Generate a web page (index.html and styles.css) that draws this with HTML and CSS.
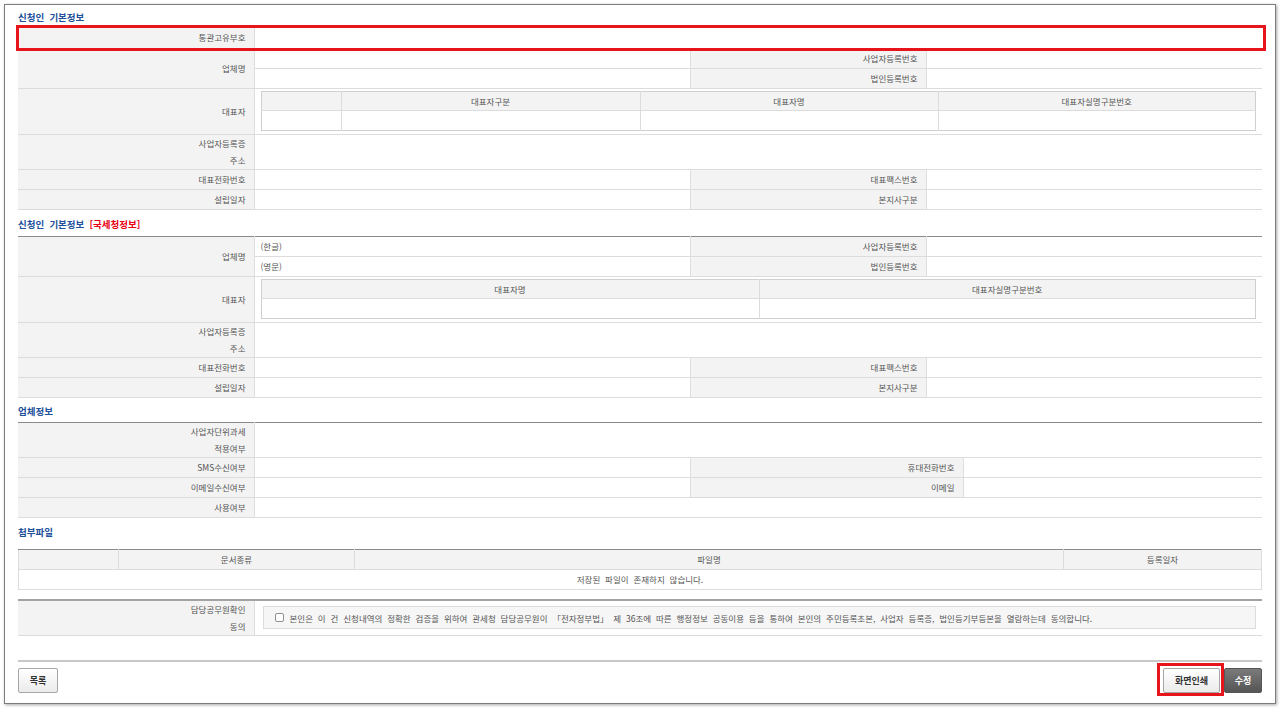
FILE: index.html
```html
<!DOCTYPE html>
<html lang="ko">
<head>
<meta charset="utf-8">
<title>신청인 기본정보</title>
<link rel="stylesheet" href="styles.css">
</head>
<body>
<div class="frame">
  <h3 class="sec-title first">신청인 기본정보</h3>
  <div class="hl-wrap">
    <table class="form">
      <colgroup><col class="c-lab"><col class="c-val"><col class="c-lab"><col></colgroup>
      <tr><th>통관고유부호</th><td colspan="3"></td></tr>
      <tr><th rowspan="2">업체명</th><td></td><th>사업자등록번호</th><td></td></tr>
      <tr><td></td><th>법인등록번호</th><td></td></tr>
      <tr><th>대표자</th>
        <td colspan="3" class="nest-cell">
          <table class="inner">
            <colgroup><col class="n1"><col class="n2"><col class="n3"><col></colgroup>
            <tr><th></th><th>대표자구분</th><th>대표자명</th><th>대표자실명구분번호</th></tr>
            <tr><td></td><td></td><td></td><td></td></tr>
          </table>
        </td></tr>
      <tr><th class="two">사업자등록증<br>주소</th><td colspan="3"></td></tr>
      <tr><th>대표전화번호</th><td></td><th>대표팩스번호</th><td></td></tr>
      <tr><th>설립일자</th><td></td><th>본지사구분</th><td></td></tr>
    </table>
    <div class="hl-row"></div>
  </div>

  <h3 class="sec-title s2">신청인 기본정보 <span class="red">[국세청정보]</span></h3>
  <table class="form topline">
    <colgroup><col class="c-lab"><col class="c-val"><col class="c-lab"><col></colgroup>
    <tr><th rowspan="2">업체명</th><td>(한글)</td><th>사업자등록번호</th><td></td></tr>
    <tr><td>(영문)</td><th>법인등록번호</th><td></td></tr>
    <tr><th>대표자</th>
      <td colspan="3" class="nest-cell">
        <table class="inner">
          <colgroup><col class="half"><col></colgroup>
          <tr><th>대표자명</th><th>대표자실명구분번호</th></tr>
          <tr><td></td><td></td></tr>
        </table>
      </td></tr>
    <tr><th class="two">사업자등록증<br>주소</th><td colspan="3"></td></tr>
    <tr><th>대표전화번호</th><td></td><th>대표팩스번호</th><td></td></tr>
    <tr><th>설립일자</th><td></td><th>본지사구분</th><td></td></tr>
  </table>

  <h3 class="sec-title s3">업체정보</h3>
  <table class="form topline">
    <colgroup><col class="c-lab"><col class="c-val"><col class="c-lab2"><col></colgroup>
    <tr><th class="two">사업자단위과세<br>적용여부</th><td colspan="3"></td></tr>
    <tr><th>SMS수신여부</th><td></td><th>휴대전화번호</th><td></td></tr>
    <tr><th>이메일수신여부</th><td></td><th>이메일</th><td></td></tr>
    <tr><th>사용여부</th><td colspan="3"></td></tr>
  </table>

  <h3 class="sec-title s4">첨부파일</h3>
  <table class="list topline">
    <colgroup><col class="l1"><col class="l2"><col class="l3"><col></colgroup>
    <tr><th></th><th>문서종류</th><th>파일명</th><th>등록일자</th></tr>
    <tr><td colspan="4" class="empty">저장된 파일이 존재하지 않습니다.</td></tr>
  </table>

  <table class="form topline agree">
    <colgroup><col class="c-lab"><col></colgroup>
    <tr><th class="two">담당공무원확인<br>동의</th>
      <td class="agree-cell">
        <div class="agree-box"><span class="chk"></span><span>본인은 이 건 신청내역의 정확한 검증을 위하여 관세청 담당공무원이 「전자정부법」 제 36조에 따른 행정정보 공동이용 등을 통하여 본인의 주민등록초본, 사업자 등록증, 법인등기부등본을 열람하는데 동의합니다.</span></div>
      </td></tr>
  </table>

  <div class="btn-bar">
    <button class="btn">목록</button>
    <div class="btn-group">
      <span class="hl-btn"><button class="btn print">화면인쇄</button></span>
      <button class="btn dark">수정</button>
    </div>
  </div>
</div>
</body>
</html>
```

FILE: styles.css
```css
* { box-sizing: border-box; }
html, body { margin: 0; padding: 0; background: #fff; }
body {
  font-family: "Noto Sans CJK KR", "Noto Sans", sans-serif;
  font-size: 8.5px;
  word-spacing: 2.5px;
  color: #555;
}
.frame {
  margin: 4px;
  width: 1272px;
  height: 700px;
  border: 1px solid #7c7c7c;
  box-shadow: 1px 1px 3px rgba(0,0,0,0.35);
  padding: 0 13px;
  background: #fff;
}
.sec-title {
  margin: 0;
  font-size: 9.5px;
  font-weight: bold;
  color: #21509a;
  line-height: 14px;
  padding: 8px 0 5px;
}
.sec-title.first { padding: 5px 0 4px; }
.sec-title.s2 { padding: 7px 0 5px; }
.sec-title.s3 { padding: 6px 0 4px; }
.sec-title.s4 { padding: 7px 0 10px; }
.red { color: #e60012; }

table { border-collapse: collapse; table-layout: fixed; width: 100%; }
.c-lab { width: 236px; }
.c-val { width: 436px; }
.c-lab2 { width: 273px; }

.form th, .form td {
  border-bottom: 1px solid #dcdcdc;
  line-height: 19px;
  height: 20px;
  padding: 0 6px;
  font-weight: normal;
  white-space: nowrap;
  overflow: hidden;
}
.form th {
  background: #f3f3f3;
  text-align: right;
  padding-right: 8px;
  border-right: 1px solid #dedede;
  border-left: 1px solid #dedede;
  color: #555;
}
.form tr > th:first-child { border-left: 0; }
.form td { text-align: left; color: #555; }
.form th.two { line-height: 17px; }
.topline { border-top: 1px solid #8a8a8a; }

.hl-wrap { position: relative; }
.hl-row {
  position: absolute;
  left: -2px; right: -4px;
  top: -3px; height: 26px;
  border: 3px solid #e8141c;
}

.form td.nest-cell { padding: 2px 6px 3px; line-height: normal; height: auto; }
.inner { border: 1px solid #cfcfcf; }
.inner .n1 { width: 80px; }
.inner .n2 { width: 299px; }
.inner .n3 { width: 298px; }
.inner .half { width: 498px; }
.inner th, .inner td {
  padding: 0 4px;
  text-align: center;
  font-weight: normal;
  border-left: 1px solid #dcdcdc;
  color: #555;
}
.inner th {
  background: #f3f3f3;
  line-height: 18px;
  height: 19px;
  border-bottom: 1px solid #dcdcdc;
  border-right: 0;
}
.inner td { line-height: 19px; height: 20px; border-bottom: 0; }
.inner tr > :first-child { border-left: 0; }

.list { border-right: 1px solid #dcdcdc; border-left: 1px solid #dcdcdc; }
.list .l1 { width: 100px; }
.list .l2 { width: 236px; }
.list .l3 { width: 709px; }
.list th, .list td {
  line-height: 19px;
  height: 20px;
  padding: 0 4px;
  text-align: center;
  font-weight: normal;
  color: #555;
  border-bottom: 1px solid #dcdcdc;
}
.list th { background: #f3f3f3; border-left: 1px solid #dcdcdc; }
.list th:first-child { border-left: 0; }
.list td.empty { background: #fff; }

.agree { margin-top: 9px; border-top: 2px solid #a3a3a3; }
.form td.agree-cell { padding: 5px 6px 5px 8px; line-height: normal; height: auto; }
.agree-box {
  border: 1px solid #dcdcdc;
  background: #f6f6f6;
  height: 23px;
  display: flex;
  align-items: center;
  padding-left: 11px;
  color: #555;
}
.chk {
  width: 9px; height: 9px;
  border: 1px solid #8f8f8f;
  border-radius: 2px;
  background: #fff;
  margin-right: 6px;
  flex: none;
}

.btn-bar {
  margin-top: 24px;
  border-top: 2px solid #c8c8c8;
  padding-top: 6px;
  display: flex;
  justify-content: space-between;
  align-items: flex-start;
}
.btn-group { display: flex; gap: 4px; }
.btn {
  font-family: inherit;
  font-size: 9px;
  font-weight: bold;
  height: 25px;
  padding: 0;
  border: 1px solid #a6a6a6;
  border-radius: 2px;
  background: linear-gradient(#ffffff, #ebebeb);
  color: #333;
  width: 40px;
}
.btn.print { width: 57px; }
.btn.dark {
  width: 38px;
  border-color: #555;
  background: linear-gradient(#7a7a7a, #555);
  color: #fff;
}
.hl-btn { position: relative; display: inline-block; height: 25px; }
.hl-btn::after {
  content: "";
  position: absolute;
  left: -6px; right: -4px; top: -5px; bottom: -3px;
  border: 3px solid #e8141c;
}
```
